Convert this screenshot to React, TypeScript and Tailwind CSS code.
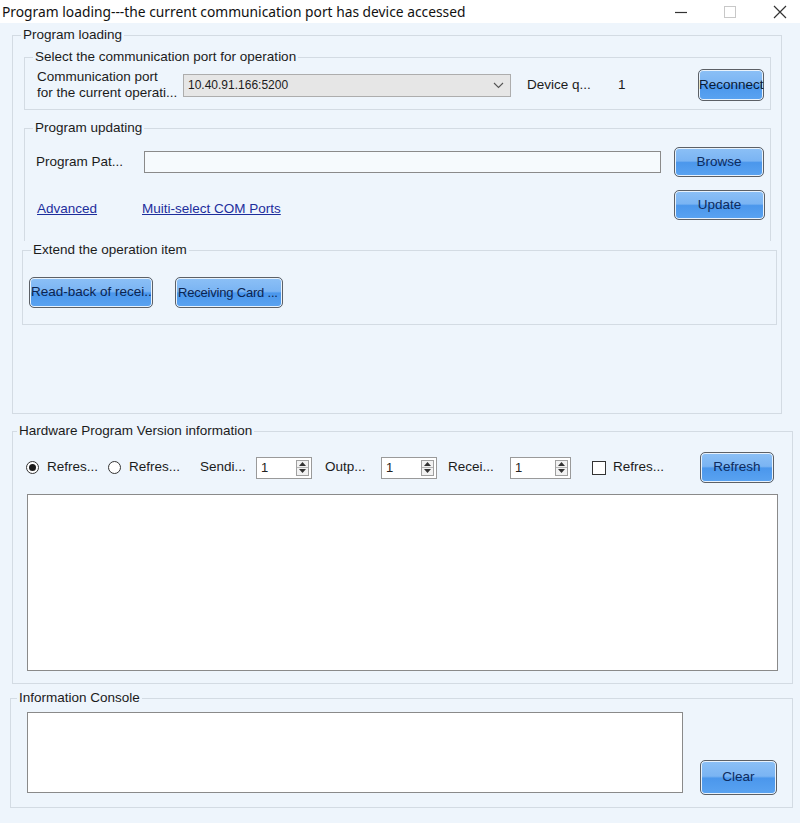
import type { ReactNode } from 'react';

const font = { fontFamily: '"Liberation Sans", Arial, sans-serif' };

// Group box with its caption sitting on the top border
const GroupBox = ({
  title,
  className,
  titleLeft = 'left-[8px]',
  children,
}: {
  title: string;
  className: string;
  titleLeft?: string;
  children?: ReactNode;
}) => (
  <div className={`relative border border-[#d3dbe3] ${className}`}>
    <span className={`absolute -top-[9px] ${titleLeft} bg-[#eef5fc] px-[2px] text-[13.5px] leading-[16px] text-[#1b1b1b]`}>
      {title}
    </span>
    {children}
  </div>
);

const BlueButton = ({
  label,
  className,
  textClass = 'text-[13.5px] text-[#0d2b5e] justify-center overflow-hidden',
}: {
  label: string;
  className: string;
  textClass?: string;
}) => (
  <button
    className={`flex shrink-0 items-center whitespace-nowrap rounded-[5px] border border-[#5c6066] bg-[linear-gradient(#8cc0f6_0%,#7ab4f3_46%,#4b97ec_52%,#5aa3f1_100%)] shadow-[inset_0_0_0_1px_#e8f2fc] ${textClass} ${className}`}
  >
    {label}
  </button>
);

const Spinner = ({ className }: { className: string }) => (
  <div className={`flex h-[22px] shrink-0 items-center border border-[#9a9a9a] bg-white ${className}`}>
    <span className="flex-1 pl-[4px] text-[13px] text-[#222]">1</span>
    <div className="mr-[2px] flex h-[16px] w-[13px] flex-col border border-[#a0a0a0] bg-[#f2f2f2]">
      <div className="flex flex-1 items-center justify-center border-b border-[#b5b5b5]">
        <svg width="7" height="4" viewBox="0 0 7 4">
          <path d="M0 4 L3.5 0 L7 4 Z" fill="#333" />
        </svg>
      </div>
      <div className="flex flex-1 items-center justify-center">
        <svg width="7" height="4" viewBox="0 0 7 4">
          <path d="M0 0 L3.5 4 L7 0 Z" fill="#333" />
        </svg>
      </div>
    </div>
  </div>
);

const App = () => {
  return (
    <div className="h-[823px] w-[800px] overflow-hidden bg-[#eef5fc] text-[13.5px]" style={font}>
      {/* Title bar */}
      <div className="flex h-[23px] items-center bg-white">
        <span className="pl-[2px] text-[13.8px] leading-none text-[#111]" style={{ fontFamily: '"Noto Sans", sans-serif' }}>
          Program loading---the current communication port has device accessed
        </span>
        <div className="ml-auto flex items-center">
          <svg width="14" height="14" viewBox="0 0 14 14" className="mr-[35px]">
            <path d="M1 7.5 H13" stroke="#333" strokeWidth="1.2" />
          </svg>
          <svg width="14" height="14" viewBox="0 0 14 14" className="mr-[36px]">
            <rect x="1.5" y="1.5" width="11" height="11" fill="none" stroke="#c8c8c8" strokeWidth="1" />
          </svg>
          <svg width="14" height="14" viewBox="0 0 14 14" className="mr-[13px]">
            <path d="M1 1 L13 13 M13 1 L1 13" stroke="#333" strokeWidth="1.2" />
          </svg>
        </div>
      </div>

      <div className="pt-[12px]">
        {/* Program loading */}
        <GroupBox title="Program loading" className="ml-[12px] h-[379px] w-[770px]">
          <div className="flex flex-col pt-[21px] pl-[11px]">
            <GroupBox title="Select the communication port for operation" className="flex h-[53px] w-[747px] items-center pt-[3px]">
              <div className="ml-[12px] w-[146px] leading-[16px] text-[#1b1b1b]">
                <div>Communication port</div>
                <div>for the current operati...</div>
              </div>
              <div className="flex h-[23px] w-[328px] items-center border border-[#adadad] bg-[#e6e6e6] pl-[4px] pr-[6px]">
                <span className="flex-1 text-[12px] text-[#1b1b1b]">10.40.91.166:5200</span>
                <svg width="11" height="7" viewBox="0 0 11 7">
                  <path d="M1 1 L5.5 5.5 L10 1" fill="none" stroke="#555" strokeWidth="1.1" />
                </svg>
              </div>
              <span className="ml-[16px] w-[88px] text-[#1b1b1b]">Device q...</span>
              <span className="w-[83px] pl-[3px] text-[#1b1b1b]">1</span>
              <BlueButton label="Reconnect" className="h-[32px] w-[66px]" textClass="text-[13.5px] text-[#0a1a33] justify-start overflow-visible" />
            </GroupBox>

            <GroupBox title="Program updating" className="mt-[18px] flex h-[113px] w-[747px] flex-col border-b-0 pt-[18px]">
              <div className="flex h-[30px] items-center">
                <span className="ml-[11px] w-[108px] text-[#1b1b1b]">Program Pat...</span>
                <div className="h-[22px] w-[517px] border border-[#8a8a8a] bg-[#f6fafd]" />
                <BlueButton label="Browse" className="ml-[13px] h-[30px] w-[90px]" />
              </div>
              <div className="mt-[13px] flex h-[30px] items-center">
                <div className="flex pt-[8px]">
                  <a className="ml-[12px] w-[105px] text-[#1d2e9c] underline">Advanced</a>
                  <a className="text-[#1d2e9c] underline">Muiti-select COM Ports</a>
                </div>
                <BlueButton label="Update" className="ml-auto mr-[5px] h-[30px] w-[91px]" />
              </div>
            </GroupBox>

            <GroupBox title="Extend the operation item" className="mt-[9px] -ml-[2px] flex h-[75px] w-[755px] items-start pt-[26px]">
              <BlueButton label="Read-back of recei.." className="ml-[6px] h-[31px] w-[124px]" textClass="text-[13.5px] text-[#0b2450] justify-start overflow-hidden pl-[1px]" />
              <BlueButton label="Receiving Card ..." className="ml-[22px] h-[31px] w-[108px]" textClass="text-[13px] tracking-[-0.2px] text-[#0b2450] justify-start pl-[2px]" />
            </GroupBox>
          </div>
        </GroupBox>

        {/* Hardware program version */}
        <GroupBox title="Hardware Program Version information" titleLeft="left-[4px]" className="mt-[17px] ml-[12px] h-[253px] w-[781px] pt-[20px]">
          <div className="flex h-[31px] items-center text-[#1b1b1b]">
            <span className="ml-[13px] flex h-[13px] w-[13px] shrink-0 items-center justify-center rounded-full border border-[#333] bg-white">
              <span className="h-[7px] w-[7px] rounded-full bg-[#1b1b1b]" />
            </span>
            <span className="ml-[8px] w-[61px]">Refres...</span>
            <span className="h-[13px] w-[13px] shrink-0 rounded-full border border-[#333] bg-white" />
            <span className="ml-[8px] w-[71px]">Refres...</span>
            <span className="w-[56px]">Sendi...</span>
            <Spinner className="w-[56px]" />
            <span className="ml-[13px] w-[56px]">Outp...</span>
            <Spinner className="w-[56px]" />
            <span className="ml-[11px] w-[62px]">Recei...</span>
            <Spinner className="w-[61px]" />
            <span className="ml-[21px] h-[14px] w-[14px] shrink-0 border border-[#333] bg-white" />
            <span className="ml-[7px] w-[87px]">Refres...</span>
            <BlueButton label="Refresh" className="h-[31px] w-[74px]" />
          </div>
          <div className="mt-[11px] ml-[14px] h-[177px] w-[751px] border border-[#8a8a8a] bg-white" />
        </GroupBox>

        {/* Information console */}
        <GroupBox title="Information Console" titleLeft="left-[6px]" className="mt-[14px] ml-[10px] flex h-[110px] w-[783px] items-start pt-[13px]">
          <div className="ml-[16px] h-[81px] w-[656px] border border-[#8a8a8a] bg-white" />
          <BlueButton label="Clear" className="mt-[48px] ml-[17px] h-[35px] w-[77px]" />
        </GroupBox>
      </div>
    </div>
  );
};

export default App;
